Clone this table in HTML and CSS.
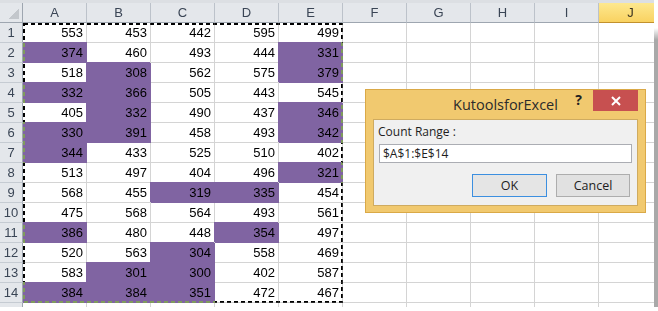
FILE: index.html
```html
<!DOCTYPE html>
<html lang="en">
<head>
    <meta charset="UTF-8">
    <meta name="viewport" content="width=device-width, initial-scale=1.0">
    <title>Count Range</title>
    <link rel="stylesheet" href="styles.css">
</head>
<body>
    <div class="frame">
        <div class="sheet">
            <div class="grid" id="grid"></div>

            <!-- copy marquee around A1:E14 -->
            <svg class="marquee" width="320" height="280" viewBox="0 0 320 280">
                <rect x="1" y="1" width="318" height="278" />
            </svg>

            <div class="dialog">
                <div class="title-bar">
                    <span></span>
                    <span class="title">KutoolsforExcel</span>
                    <div class="title-buttons">
                        <span class="help">?</span>
                        <span class="close">
                            <svg width="10" height="10" viewBox="0 0 10 10">
                                <path d="M1 1 L9 9 M9 1 L1 9" stroke="#fff" stroke-width="2" />
                            </svg>
                        </span>
                    </div>
                </div>
                <div class="panel">
                    <label class="field-label">Count Range :</label>
                    <input class="range-input" type="text" value="$A$1:$E$14">
                    <div class="buttons">
                        <button class="btn btn-ok">OK</button>
                        <button class="btn">Cancel</button>
                    </div>
                </div>
            </div>
        </div>
    </div>

    <script>
        const columns = ['A', 'B', 'C', 'D', 'E', 'F', 'G', 'H', 'I', 'J'];
        const data = [
            [553, 453, 442, 595, 499],
            [374, 460, 493, 444, 331],
            [518, 308, 562, 575, 379],
            [332, 366, 505, 443, 545],
            [405, 332, 490, 437, 346],
            [330, 391, 458, 493, 342],
            [344, 433, 525, 510, 402],
            [513, 497, 404, 496, 321],
            [568, 455, 319, 335, 454],
            [475, 568, 564, 493, 561],
            [386, 480, 448, 354, 497],
            [520, 563, 304, 558, 469],
            [583, 301, 300, 402, 587],
            [384, 384, 351, 472, 467]
        ];

        let html = '<div class="corner"></div>';
        columns.forEach(col => {
            const active = col === 'J' ? ' active' : '';
            html += `<div class="col-head${active}">${col}</div>`;
        });

        // one extra empty row so the grid lines run on under row 14
        for (let r = 0; r < 15; r++) {
            const label = r < data.length ? r + 1 : '';
            html += `<div class="row-head">${label}</div>`;
            columns.forEach((col, c) => {
                const value = data[r] && data[r][c] !== undefined ? data[r][c] : '';
                let cls = 'cell';
                // values under 400 are filled purple
                if (value !== '' && value < 400) {
                    cls += c === 0 ? ' fill first' : ' fill';
                }
                html += `<div class="${cls}">${value}</div>`;
            });
        }

        document.getElementById('grid').innerHTML = html;
    </script>
</body>
</html>
```

FILE: styles.css
```css
body {
    margin: 0;
    background: #fff;
    font-family: "Liberation Sans", Arial, sans-serif;
}
.frame {
    position: relative;
    width: 654px;
    height: 307px;
}
/* page shadow on the right and bottom edges */
.frame::after {
    content: "";
    position: absolute;
    left: 654px;
    top: 28px;
    width: 4px;
    height: 283px;
    background: linear-gradient(to bottom, rgba(160,160,160,0), #a9a9a9 12px);
}
.frame::before {
    content: "";
    position: absolute;
    left: 36px;
    top: 307px;
    width: 622px;
    height: 4px;
    background: linear-gradient(to right, rgba(170,170,170,0), #b0b0b0 14px);
}
.sheet {
    position: relative;
    width: 654px;
    height: 307px;
    overflow: hidden;
    box-sizing: border-box;
    border-top: 3px solid #dcdfe3;
}
.grid {
    display: grid;
    grid-template-columns: 23px repeat(10, 64px);
    grid-auto-rows: 20px;
    font-size: 13px;
    color: #000;
}
.grid > div {
    box-sizing: border-box;
    line-height: 19px;
    white-space: nowrap;
}
.corner {
    background: #e4e7eb linear-gradient(135deg, transparent 50%, #c3c7cc 50%) no-repeat right 3px bottom 3px / 10px 10px;
    border-right: 1px solid #9ea6b0;
    border-bottom: 1px solid #9ea6b0;
}
.col-head {
    background: #e4e7eb;
    border-right: 1px solid #bcc2ca;
    border-bottom: 1px solid #9ea6b0;
    text-align: center;
    color: #3a4555;
}
.col-head.active {
    background: linear-gradient(to bottom, #fde88f, #f9d261);
    border-right-color: #e0b04d;
    border-bottom-color: #c2912d;
    color: #3a3220;
}
.row-head {
    background: #e4e7eb;
    border-right: 1px solid #9ea6b0;
    border-bottom: 1px solid #c5cbd2;
    text-align: center;
    color: #3a4555;
}
.cell {
    border-right: 1px solid #d4d4d4;
    border-bottom: 1px solid #d4d4d4;
    text-align: right;
    padding-right: 3px;
}
.cell.fill {
    background: #8064a2;
    border-color: #8064a2;
    box-shadow: -1px -1px 0 #8064a2;
}
.cell.fill.first {
    box-shadow: 0 -1px 0 #8064a2;
}
.marquee {
    position: absolute;
    left: 23px;
    top: 20px;
    mix-blend-mode: difference;
}
.marquee rect {
    fill: none;
    stroke: #fff;
    stroke-width: 2;
    stroke-dasharray: 4 3;
}

/* dialog */
.dialog {
    position: absolute;
    left: 365px;
    top: 86px;
    width: 281px;
    height: 124px;
    box-sizing: border-box;
    background: #f1c96f;
    border: 1px solid #daa947;
    padding: 0 7px 6px 7px;
    display: flex;
    flex-direction: column;
    font-family: "Open Sans", "Noto Sans", sans-serif;
    color: #1e1e1e;
}
.title-bar {
    height: 29px;
    display: grid;
    grid-template-columns: 1fr auto 1fr;
}
.title {
    font-size: 14.5px;
    line-height: 30px;
    color: #2b2b2b;
}
.title-buttons {
    display: flex;
    justify-content: flex-end;
    align-items: flex-start;
}
.help {
    font-size: 14px;
    font-weight: bold;
    line-height: 20px;
    margin-right: 11px;
    color: #222;
}
.close {
    width: 45px;
    height: 21px;
    background: #c75050;
    display: flex;
    align-items: center;
    justify-content: center;
}
.panel {
    flex: 1;
    background: #f0f0f0;
    border: 1px solid #cfab60;
    padding: 4px 4px 0 4px;
    display: flex;
    flex-direction: column;
}
.field-label {
    font-size: 12px;
    line-height: 16px;
}
.range-input {
    margin: 4px 0 0 1px;
    width: 253px;
    height: 19px;
    box-sizing: border-box;
    border: 1px solid #abadb3;
    padding: 0 3px;
    font-family: "Open Sans", "Noto Sans", sans-serif;
    font-size: 12px;
    color: #1e1e1e;
    background: #fff;
}
.buttons {
    display: flex;
    justify-content: flex-end;
    gap: 9px;
    margin: 11px 3px 0 0;
}
.btn {
    width: 74px;
    height: 23px;
    border: 1px solid #adadad;
    background: #e1e1e1;
    font-family: "Open Sans", "Noto Sans", sans-serif;
    font-size: 12.5px;
    color: #1e1e1e;
    padding: 0;
}
.btn-ok {
    width: 75px;
    border-color: #3c8fe0;
    background: #e5e5e5;
}
```
